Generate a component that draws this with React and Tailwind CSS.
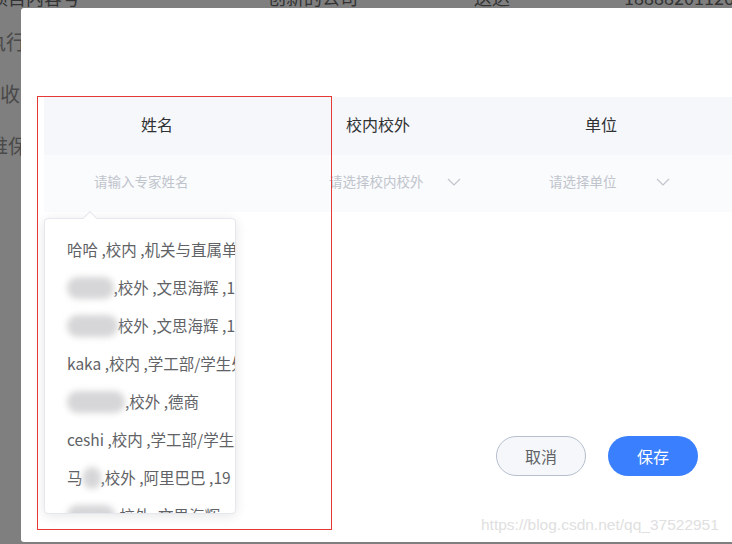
import React from "react";

const font = { fontFamily: '"Noto Sans CJK SC", "Liberation Sans", sans-serif' };

const Chevron = () => (
  <svg width="14" height="8" viewBox="0 0 14 8" fill="none" className="shrink-0">
    <path d="M1 1l6 6 6-6" stroke="#c0c4cc" strokeWidth="1.2" />
  </svg>
);

const Blur = ({ w }) => (
  <span
    className="inline-block h-[22px] align-middle rounded-full bg-[#d6d6d8] blur-[3px]"
    style={{ width: w }}
  />
);

const items = [
  { text: "哈哈 ,校内 ,机关与直属单位" },
  { blur: 58, text: " ,校外 ,文思海辉 ,1" },
  { blur: 72, text: "校外 ,文思海辉 ,1" },
  { text: "kaka ,校内 ,学工部/学生处" },
  { blur: 58, text: " ,校外 ,德商" },
  { text: "ceshi ,校内 ,学工部/学生处" },
  { pre: "马", blur: 18, text: " ,校外 ,阿里巴巴 ,19" },
  { blur: 48, text: " ,校外 ,文思海辉" },
];

export default function App() {
  return (
    <div className="relative w-[732px] h-[544px] overflow-hidden bg-[#7f7f7f]" style={font}>
      {/* page behind the mask */}
      <div className="absolute left-[-14px] top-[30px] text-[20px] text-[#4a4a4a] leading-[24px]">执行</div>
      <div className="absolute left-[-20px] top-[82px] text-[20px] text-[#4a4a4a] leading-[24px]">验收</div>
      <div className="absolute left-[-12px] top-[134px] text-[20px] text-[#4a4a4a] leading-[24px]">维保</div>
      <div className="absolute left-[-10px] top-[-13px] text-[18px] text-[#333] leading-[20px]">项目内容号</div>
      <div className="absolute left-[268px] top-[-13px] text-[18px] text-[#333] leading-[20px]">创新的公司</div>
      <div className="absolute left-[474px] top-[-13px] text-[18px] text-[#333] leading-[20px]">送达</div>
      <div className="absolute left-[624px] top-[-13px] text-[18px] text-[#333] leading-[20px]">18888201126</div>

      {/* dialog */}
      <div className="absolute left-[21px] top-[8px] w-[760px] h-[534px] bg-white rounded-[3px]">
        <div className="ml-[23px] mt-[89px]">
          <div className="flex h-[58px] pb-[4px] bg-[#f5f7fa] text-[16px] text-[#303133]">
            <div className="w-[226px] flex items-center justify-center">姓名</div>
            <div className="w-[216px] flex items-center justify-center">校内校外</div>
            <div className="w-[230px] flex items-center justify-center">单位</div>
          </div>
          <div className="flex h-[57px] pb-[4px] bg-[#fafbfd] text-[13.5px] text-[#c0c4cc]">
            <div className="w-[226px] flex items-center pl-[50px]">请输入专家姓名</div>
            <div className="w-[216px] flex items-center pl-[59px] gap-[23px]">
              <span>请选择校内校外</span>
              <Chevron />
            </div>
            <div className="w-[230px] flex items-center pl-[63px] gap-[39px]">
              <span>请选择单位</span>
              <Chevron />
            </div>
          </div>
        </div>

        <div className="flex gap-[22px] ml-[475px] mt-[224px]">
          <button className="w-[90px] h-[40px] rounded-full border border-[#b6bfce] bg-[#f5f7fa] text-[16px] text-[#606266]">
            取消
          </button>
          <button className="w-[90px] h-[40px] rounded-full bg-[#3a80fe] text-[16px] text-white">
            保存
          </button>
        </div>

        {/* dropdown */}
        <div className="absolute left-[23px] top-[210px] w-[192px] h-[296px] bg-white border border-[#e4e7ed] rounded-[4px] shadow-[0_2px_12px_rgba(0,0,0,0.1)]">
          <div className="absolute left-[40px] top-[-6px] w-[10px] h-[10px] bg-white border-l border-t border-[#e4e7ed] rotate-45" />
          <div className="h-full overflow-hidden pt-[12px] pl-[22px]">
            {items.map((it, i) => (
              <div key={i} className="h-[38px] flex items-center whitespace-nowrap text-[15.5px] text-[#606266]">
                {it.pre && <span>{it.pre}</span>}
                {it.blur && <Blur w={it.blur} />}
                <span>{it.text}</span>
              </div>
            ))}
          </div>
        </div>

        {/* annotation frame */}
        <div className="absolute left-[16px] top-[88px] w-[295px] h-[434px] border border-[#e53935]" />
      </div>

      <div
        className="absolute left-[481px] top-[515px] text-[15.5px] text-[#e0e0e0] leading-[20px]"
        style={{ fontFamily: '"Liberation Sans", Arial, sans-serif' }}
      >
        https://blog.csdn.net/qq_37522951
      </div>
    </div>
  );
}
